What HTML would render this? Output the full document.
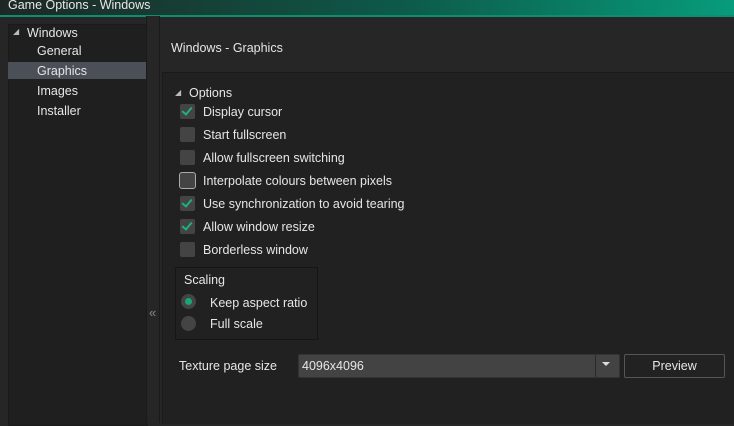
<!DOCTYPE html>
<html><head><style>
body{margin:0;width:734px;height:423px;overflow:hidden;background:#262626;font-family:"Liberation Sans",sans-serif;font-size:12.5px;color:#e6e6e6;position:relative}
.a{position:absolute}
.t{margin-top:1px}
.title{left:0;top:0;width:734px;height:15px;background:linear-gradient(90deg,#1e2724 0%,#0d5a49 55%,#079c7c 100%);border-bottom:2px solid #0b8f6f}
.title span{position:absolute;left:8px;top:-2px;font-size:12.5px;color:#e8e8e8}
.cb{position:absolute;left:180px;width:15px;height:15px;background:#444;border-radius:2px}
.cb.on::after{content:"";position:absolute;left:4px;top:1px;width:4px;height:8px;border:solid #1fb07d;border-width:0 2.5px 2.5px 0;transform:rotate(40deg)}
.lbl{position:absolute;left:203px;margin-top:1px}
</style></head><body>
<div class="a title"><span>Game Options - Windows</span></div>
<div class="a" style="left:8px;top:24px;width:138px;height:400px;background:#1f1f1f;border:1px solid #1a1a1a"></div>
<div class="a" style="left:13px;top:27px;font-size:8px;color:#bbb">◢</div>
<div class="a" style="left:27px;top:26px">Windows</div>
<div class="a" style="left:37px;top:44px">General</div>
<div class="a" style="left:8px;top:62px;width:138px;height:17px;background:#4b4f57"></div>
<div class="a" style="left:37px;top:64px">Graphics</div>
<div class="a" style="left:37px;top:84px">Images</div>
<div class="a" style="left:37px;top:104px">Installer</div>
<div class="a" style="left:146px;top:16px;width:12px;height:407px;background:#262626;border-left:1px solid #1a1a1a;border-right:1px solid #1a1a1a"></div>
<div class="a" style="left:149px;top:305px;color:#888;font-size:13px">«</div>
<div class="a" style="left:171px;top:41px">Windows - Graphics</div>
<div class="a" style="left:162px;top:72px;width:572px;height:351px;background:#212121;border-top:1px solid #1a1a1a;border-left:1px solid #1a1a1a"></div>
<div class="a" style="left:175px;top:88px;font-size:8px;color:#bbb">◢</div>
<div class="a" style="left:189px;top:86px">Options</div>
<div class="cb on" style="top:104px"></div><div class="lbl" style="top:104px">Display cursor</div>
<div class="cb" style="top:127px"></div><div class="lbl" style="top:127px">Start fullscreen</div>
<div class="cb" style="top:150px"></div><div class="lbl" style="top:150px">Allow fullscreen switching</div>
<div class="cb" style="top:172px;left:179px;width:15px;height:15px;border:1px solid #aaa;border-radius:3px"></div><div class="lbl" style="top:173px">Interpolate colours between pixels</div>
<div class="cb on" style="top:196px"></div><div class="lbl" style="top:196px">Use synchronization to avoid tearing</div>
<div class="cb on" style="top:219px"></div><div class="lbl" style="top:219px">Allow window resize</div>
<div class="cb" style="top:242px"></div><div class="lbl" style="top:242px">Borderless window</div>
<div class="a" style="left:175px;top:267px;width:141px;height:71px;border:1px solid #151515"></div>
<div class="a" style="left:184px;top:273px">Scaling</div>
<div class="a" style="left:181px;top:294px;width:15px;height:15px;border-radius:50%;background:#444"></div>
<div class="a" style="left:185px;top:298px;width:7px;height:7px;border-radius:50%;background:#17a873"></div>
<div class="a" style="left:210px;top:296px">Keep aspect ratio</div>
<div class="a" style="left:181px;top:316px;width:15px;height:15px;border-radius:50%;background:#444"></div>
<div class="a" style="left:210px;top:317px">Full scale</div>
<div class="a" style="left:179px;top:359px">Texture page size</div>
<div class="a" style="left:298px;top:354px;width:320px;height:22px;background:#434343;border:1px solid #333;border-radius:2px"></div>
<div class="a" style="left:595px;top:355px;width:1px;height:22px;background:#2a2a2a"></div>
<div class="a" style="left:302px;top:359px">4096x4096</div>
<div class="a" style="left:602px;top:362px;width:0;height:0;border-left:4px solid transparent;border-right:4px solid transparent;border-top:4px solid #ddd"></div>
<div class="a" style="left:624px;top:354px;width:99px;height:22px;border:1px solid #555;border-radius:2px;background:#222;text-align:center;line-height:23px">Preview</div>
</body></html>
